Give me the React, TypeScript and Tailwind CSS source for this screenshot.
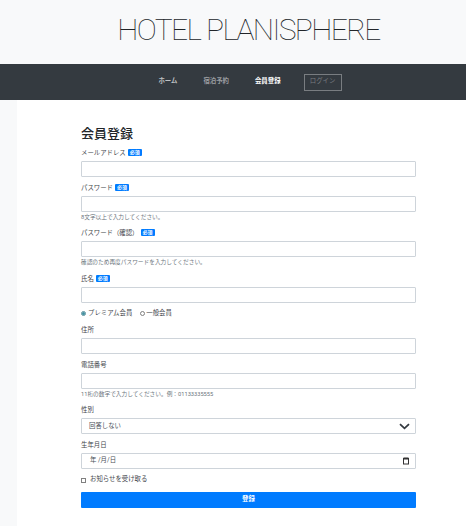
// App.tsx
const font = "font-['Roboto','Noto_Sans_CJK_JP',sans-serif]";

function Badge() {
  return (
    <span className="ml-[2px] inline-block rounded-[1px] bg-[#007bff] px-[2px] align-[1px] text-[5px] leading-[7px] font-bold text-white">
      必須
    </span>
  );
}

function Field({
  label,
  required,
  hint,
  children,
}: {
  label: string;
  required?: boolean;
  hint?: string;
  children?: React.ReactNode;
}) {
  return (
    <div className="mb-[6px]">
      <div className="mb-[3px] h-[10px] text-[6.4px] leading-[11px] text-[#3f454b]">
        {label}
        {required && <Badge />}
      </div>
      {children ?? <input type="text" className={inputClass} />}
      {hint && <div className="mt-[1px] h-[9px] text-[5.7px] leading-[9px] text-[#6c757d]">{hint}</div>}
    </div>
  );
}

const inputClass = "block h-[16px] w-full rounded-[1px] border border-[#ced4da] bg-white outline-none";

export default function App() {
  return (
    <div className={`${font} h-[526px] w-[466px] overflow-hidden bg-white`}>
      <header className="flex h-[64px] items-center justify-center bg-[#f8f9fa] pb-[5px] pl-[31px]">
        <h1 className="font-['Roboto',sans-serif] text-[30px] leading-none font-thin tracking-[-1.6px] text-[#212529]">
          HOTEL PLANISPHERE
        </h1>
      </header>

      <nav className="flex h-[36px] items-center justify-center bg-[#343a40] pl-[34px] text-[6.4px] font-bold">
        <a className="text-[#bfc1c3]">ホーム</a>
        <a className="ml-[26px] text-[#9a9da0]">宿泊予約</a>
        <a className="ml-[26px] text-white">会員登録</a>
        <a className="ml-[23px] flex h-[17px] w-[38px] items-center justify-center border border-[#797d81] font-normal text-[#797d81]">
          ログイン
        </a>
      </nav>

      <div className="flex h-[426px]">
        <div className="h-full w-[17px] bg-[#f8f9fa]" />
        <main className="ml-[64px] w-[335px] pt-[26px]">
          <h2 className="mb-[6px] h-[16px] text-[13px] leading-[16px] font-medium text-[#212529]">会員登録</h2>
          <Field label="メールアドレス" required />
          <Field label="パスワード" required hint="8文字以上で入力してください。" />
          <Field label="パスワード（確認）" required hint="確認のため再度パスワードを入力してください。" />
          <div className="-mb-[1px] pt-[1px]">
            <Field label="氏名" required />
          </div>

          <div className="mb-[7px] flex h-[10px] items-center text-[6.4px] leading-[10px] text-[#3f454b]">
            <span className="flex h-[5px] w-[5px] items-center justify-center rounded-full border border-[#5a8f9c]">
              <span className="h-[3px] w-[3px] rounded-full bg-[#3f8f9f]" />
            </span>
            <span className="ml-[2px]">プレミアム会員</span>
            <span className="ml-[8px] h-[5px] w-[5px] rounded-full border border-[#808080]" />
            <span className="ml-[1px]">一般会員</span>
          </div>

          <Field label="住所" />
          <Field label="電話番号" hint="11桁の数字で入力してください。例：01133335555" />

          <Field label="性別">
            <div className={`${inputClass} flex items-center justify-between pt-[1px] pr-[5px] pl-[7px] text-[6.4px] text-[#495057]`}>
              <span>回答しない</span>
              <svg width="11" height="7" viewBox="0 0 11 7" fill="none">
                <path d="M1 1.2 5.5 5.3 10 1.2" stroke="#343a40" strokeWidth="1.8" />
              </svg>
            </div>
          </Field>

          <Field label="生年月日">
            <div className={`${inputClass} flex items-center justify-between pr-[5px] pl-[8px] text-[6.4px] text-[#495057]`}>
              <span>年 /月/日</span>
              <svg width="7" height="8" viewBox="0 0 7 8" fill="none">
                <rect x="0.5" y="1.5" width="5" height="5.5" stroke="#333" strokeWidth="1" />
                <rect x="0.5" y="0.5" width="5" height="2" fill="#333" />
              </svg>
            </div>
          </Field>

          <div className="mb-[7px] flex h-[10px] items-center text-[6.4px] text-[#3f454b]">
            <span className="h-[5px] w-[5px] border border-[#808080]" />
            <span className="ml-[4px]">お知らせを受け取る</span>
          </div>

          <button
            type="button"
            className="block h-[16px] w-full rounded-[1px] bg-[#007bff] text-[6.4px] font-bold text-white"
          >
            登録
          </button>
        </main>
      </div>
    </div>
  );
}
